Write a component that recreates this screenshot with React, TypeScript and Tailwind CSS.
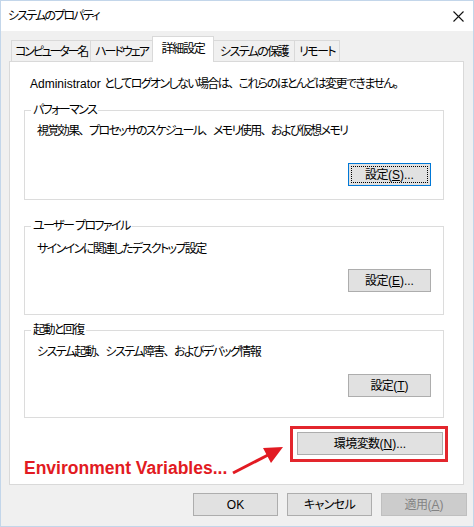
import React from "react";

const font = {
  fontFamily: '"Liberation Sans", "Noto Sans CJK JP", sans-serif',
};

function Btn({
  children,
  className = "",
  focused = false,
  disabled = false,
}: {
  children: React.ReactNode;
  className?: string;
  focused?: boolean;
  disabled?: boolean;
}) {
  const base =
    "h-[23px] flex items-center justify-center text-[12px] leading-none border whitespace-nowrap tracking-[-0.6px] ";
  const look = disabled
    ? "bg-[#cccccc] border-[#bfbfbf] text-[#838383]"
    : focused
    ? "bg-[#e1e1e1] border-[#0078d7] text-black outline-1 outline-dotted outline-black outline-offset-[-4px]"
    : "bg-[#e1e1e1] border-[#adadad] text-black";
  return <div className={base + look + " " + className}>{children}</div>;
}

function L({ children }: { children: React.ReactNode }) {
  return <span className="tracking-normal">{children}</span>;
}
function C({ children }: { children: React.ReactNode }) {
  return <span className="[font-feature-settings:normal]">{children}</span>;
}

function Tab({
  label,
  w,
  t,
  active = false,
}: {
  label: string;
  w: string;
  t: string;
  active?: boolean;
}) {
  if (active) {
    return (
      <div
        className={`${w} ${t} h-[26px] -ml-px relative z-10 bg-white border border-b-0 border-[#d9d9d9] flex items-start justify-center pt-[4px] text-[12px] leading-[16px] whitespace-nowrap`}
      >
        {label}
      </div>
    );
  }
  return (
    <div
      className={`${w} ${t} h-[22px] -ml-px first:ml-0 bg-[#f0f0f0] border border-[#d9d9d9] flex items-start justify-center pt-[3px] text-[12px] leading-[16px] whitespace-nowrap`}
    >
      {label}
    </div>
  );
}

export default function App() {
  return (
    <div
      style={font}
      className="w-[474px] h-[527px] bg-[#f0f0f0] border border-[#c3d6ea] flex flex-col text-black tracking-[-1.6px] [font-feature-settings:'palt'] overflow-hidden"
    >
      {/* Title bar */}
      <div className="h-[30px] bg-white flex items-center justify-between pl-[7px] pr-[9px] shrink-0">
        <span className="text-[12px] leading-[16px] tracking-[-1.8px]">システムのプロパティ</span>
        <svg width="11" height="11" viewBox="0 0 11 11">
          <path d="M0.5 0.5 L10.5 10.5 M10.5 0.5 L0.5 10.5" stroke="#111" strokeWidth="1.1" fill="none" />
        </svg>
      </div>

      {/* Body */}
      <div className="pl-[8px] pr-[9px] pt-[5px] flex flex-col">
        {/* Tabs */}
        <div className="h-[26px] -mb-px flex items-end pl-[2px] relative z-10">
          <Tab label="コンピューター名" w="w-[80px]" t="tracking-[-2.2px]" />
          <Tab label="ハードウェア" w="w-[63px]" t="tracking-[-2px]" />
          <Tab label="詳細設定" w="w-[62px]" t="tracking-[-1.2px]" active />
          <Tab label="システムの保護" w="w-[82px]" t="tracking-[-1.6px]" />
          <Tab label="リモート" w="w-[46px]" t="tracking-[-1.6px]" />
        </div>

        {/* Panel */}
        <div className="relative h-[424px] bg-white border border-[#d9d9d9] flex flex-col">
          <div className="mt-[14px] pl-[20px] text-[12px] leading-[16px] whitespace-nowrap">
            <L>Administrator </L>としてログオンしない場合は<C>、</C>これらのほとんどは変更できません<C>。</C>
          </div>

          {/* Performance */}
          <fieldset className="mt-[10px] ml-[14px] w-[420px] border border-[#dcdcdc] flex flex-col pb-[13px]">
            <legend className="ml-[6px] px-[2px] text-[12px] leading-[16px]">パフォーマンス</legend>
            <div className="pt-[5px] pl-[12px] text-[12px] leading-[16px] whitespace-nowrap">
              視覚効果<C>、</C>プロセッサのスケジュール<C>、</C>メモリ使用<C>、</C>および仮想メモリ
            </div>
            <Btn focused className="mt-[24px] self-end mr-[12px] w-[83px]">
              設定<L>(<u>S</u>)...</L>
            </Btn>
          </fieldset>

          {/* User profile */}
          <fieldset className="mt-[18px] ml-[14px] w-[420px] border border-[#dcdcdc] flex flex-col pb-[22px]">
            <legend className="ml-[6px] px-[2px] text-[12px] leading-[16px]">ユーザー プロファイル</legend>
            <div className="pt-[7px] pl-[12px] text-[12px] leading-[16px] whitespace-nowrap">
              サインインに関連したデスクトップ設定
            </div>
            <Btn className="mt-[12px] self-end mr-[12px] w-[83px]">
              設定<L>(<u>E</u>)...</L>
            </Btn>
          </fieldset>

          {/* Startup */}
          <fieldset className="mt-[7px] ml-[14px] w-[420px] border border-[#dcdcdc] flex flex-col pb-[20px]">
            <legend className="ml-[6px] px-[2px] text-[12px] leading-[16px]">起動と回復</legend>
            <div className="pt-[6px] pl-[12px] text-[12px] leading-[16px] whitespace-nowrap">
              システム起動<C>、</C>システム障害<C>、</C>およびデバッグ情報
            </div>
            <Btn className="mt-[14px] self-end mr-[12px] w-[83px]">
              設定<L>(<u>T</u>)</L>
            </Btn>
          </fieldset>

          {/* Environment variables row */}
          <div className="mt-[8px] flex items-start justify-between pl-[14px] pr-[15px]">
            <div className="mt-[33px] text-[17.5px] leading-[18px] font-bold tracking-normal text-[#e21a22] [font-family:'Liberation_Sans',sans-serif]">
              Environment Variables...
            </div>
            <div className="border-[3px] border-[#e3262d] pt-[3px] pb-[4px] pl-[4px] pr-[2px]">
              <Btn className="w-[146px]">
                環境変数<L>(<u>N</u>)...</L>
              </Btn>
            </div>
          </div>

          {/* Arrow annotation */}
          <svg
            className="absolute left-0 top-0 pointer-events-none"
            width="454"
            height="422"
            viewBox="0 0 454 422"
          >
            <line x1="223" y1="411" x2="259" y2="392.5" stroke="#e21a22" strokeWidth="3" />
            <polygon points="273,385 253,386 261,401" fill="#e21a22" />
          </svg>
        </div>

        {/* Bottom buttons */}
        <div className="mt-[8px] flex justify-end gap-[9px] mr-[-3px]">
          <Btn className="w-[85px]"><L>OK</L></Btn>
          <Btn className="w-[85px]">キャンセル</Btn>
          <Btn disabled className="w-[86px]">
            適用<L>(<u>A</u>)</L>
          </Btn>
        </div>
      </div>
    </div>
  );
}
